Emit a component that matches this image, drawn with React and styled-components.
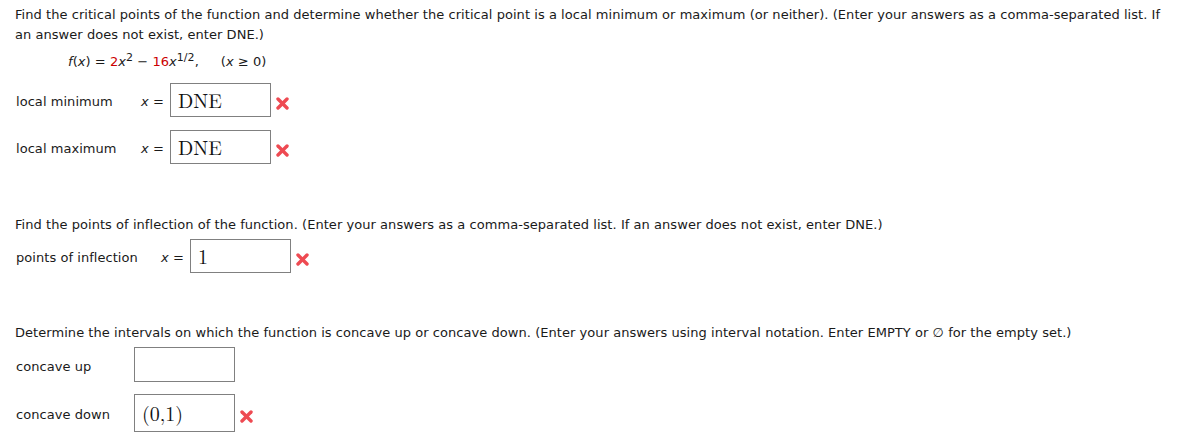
import React from "react";
import styled, { createGlobalStyle } from "styled-components";

const GlobalStyle = createGlobalStyle`
  html, body {
    margin: 0;
    padding: 0;
    background: #ffffff;
  }
  body {
    font-family: "DejaVu Sans", Verdana, sans-serif;
    font-size: 13px;
    letter-spacing: 0.05px;
    color: #1a1a1a;
  }
`;

const Page = styled.div`
  width: 1177px;
  height: 443px;
  padding: 5px 6px 0 15px;
  box-sizing: border-box;
  overflow: hidden;
`;

const Prompt = styled.p`
  margin: ${props => props.margin || "0"};
  line-height: 20px;
  font-size: 13px;
`;

const Formula = styled.div`
  margin: 7px 0 0 53px;
  line-height: 20px;
  white-space: nowrap;
`;

const Red = styled.span`
  color: #cc0000;
`;

const Sup = styled.sup`
  font-size: 11px;
  line-height: 0;
  vertical-align: 5px;
`;

const Em = styled.i`
  font-style: italic;
`;

const Cond = styled.span`
  margin-left: 22px;
`;

const AnswerRow = styled.div`
  display: flex;
  align-items: center;
  margin-top: ${props => props.top}px;
  height: ${props => props.height || 34}px;
`;

const Label = styled.span`
  width: ${props => props.width}px;
  padding-left: 1px;
  flex-shrink: 0;
  padding-top: 3px;
`;

const VarEq = styled.span`
  margin-right: 6px;
  padding-top: 2px;
  white-space: nowrap;
`;

const AnswerBox = styled.div`
  width: 101px;
  height: ${props => props.height || 34}px;
  box-sizing: border-box;
  border: 1px solid #808080;
  padding: 0 0 2px 7px;
  display: flex;
  align-items: center;
  font-family: "Latin Modern Roman", "Liberation Serif", "Times New Roman", serif;
  font-size: 20px;
  letter-spacing: 0;
  color: #111;
  flex-shrink: 0;
`;

const WrongMark = styled.svg`
  width: 13px;
  height: 13px;
  margin-left: 5px;
  margin-top: 7px;
`;

const Cross = () => (
  <WrongMark viewBox="0 0 13 13">
    <g stroke="#ee4a52" strokeWidth="3.4" strokeLinecap="round">
      <line x1="2" y1="2" x2="11" y2="11" />
      <line x1="11" y1="2" x2="2" y2="11" />
    </g>
  </WrongMark>
);

const Ex = () => (
  <VarEq>
    <Em>x</Em> =
  </VarEq>
);

export default function App() {
  return (
    <>
      <GlobalStyle />
      <Page>
        <Prompt>
          Find the critical points of the function and determine whether the critical point is a local
          minimum or maximum (or neither). (Enter your answers as a comma-separated list. If an answer
          does not exist, enter DNE.)
        </Prompt>
        <Formula>
          <Em>f</Em>(<Em>x</Em>) = <Red>2</Red>
          <Em>x</Em>
          <Sup>2</Sup> &minus; <Red>16</Red>
          <Em>x</Em>
          <Sup>1/2</Sup>,
          <Cond>
            (<Em>x</Em> &ge; 0)
          </Cond>
        </Formula>

        <AnswerRow top={11}>
          <Label width={125}>local minimum</Label>
          <Ex />
          <AnswerBox>DNE</AnswerBox>
          <Cross />
        </AnswerRow>
        <AnswerRow top={13}>
          <Label width={125}>local maximum</Label>
          <Ex />
          <AnswerBox>DNE</AnswerBox>
          <Cross />
        </AnswerRow>

        <Prompt margin="51px 0 0 0">
          Find the points of inflection of the function. (Enter your answers as a comma-separated list.
          If an answer does not exist, enter DNE.)
        </Prompt>
        <AnswerRow top={4}>
          <Label width={145}>points of inflection</Label>
          <Ex />
          <AnswerBox>1</AnswerBox>
          <Cross />
        </AnswerRow>

        <Prompt margin="50px 0 0 0">
          Determine the intervals on which the function is concave up or concave down. (Enter your
          answers using interval notation. Enter EMPTY or &empty; for the empty set.)
        </Prompt>
        <AnswerRow top={4} height={35}>
          <Label width={118}>concave up</Label>
          <AnswerBox height={35} />
        </AnswerRow>
        <AnswerRow top={12} height={38}>
          <Label width={118}>concave down</Label>
          <AnswerBox height={38}>(0,1)</AnswerBox>
          <Cross />
        </AnswerRow>
      </Page>
    </>
  );
}
